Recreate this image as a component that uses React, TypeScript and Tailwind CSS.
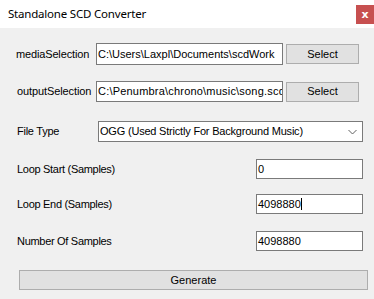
import React from "react";

const font = { fontFamily: '"Liberation Sans", Arial, sans-serif' };

function Field({ value, w, h, caret, track }: { value: string; w: string; h: string; caret?: boolean; track?: string }) {
  return (
    <div
      className={`${w} ${h} bg-white border border-[#7a7a7a] overflow-hidden whitespace-nowrap flex items-center pl-[1px] text-[11px] text-black leading-none ${track ?? ""}`}
    >
      <span>{value}</span>
      {caret && <span className="inline-block w-[1px] h-[12px] bg-black" />}
    </div>
  );
}

function Btn({ label, w, h }: { label: string; w: string; h: string }) {
  return (
    <div
      className={`${w} ${h} bg-[#e1e1e1] border border-[#adadad] flex items-center justify-center text-[11px] text-black leading-none`}
    >
      {label}
    </div>
  );
}

export default function App() {
  return (
    <div className="w-[374px] h-[299px] bg-[#f0f0f0] flex flex-col overflow-hidden" style={font}>
      <div className="h-[28px] bg-white flex items-start justify-between">
        <div
          className="pl-[8px] pt-[5px] text-[11.5px] tracking-[-0.2px] text-black leading-[18px]"
          style={{ fontFamily: '"Noto Sans", "Open Sans", sans-serif' }}
        >
          Standalone SCD Converter
        </div>
        <div
          className="mt-[5px] w-[18px] h-[19px] bg-[#c75050] flex items-center justify-center text-white text-[11px] font-bold leading-none"
          style={{ fontFamily: '"DejaVu Sans", sans-serif' }}
        >
          x
        </div>
      </div>
      <div className="flex flex-col">
        <div className="mt-[15px] h-[22px] flex items-center">
          <div className="w-[96px] pl-[16px] text-[11px] tracking-[-0.15px] text-black">mediaSelection</div>
          <Field value={"C:\\Users\\Laxpl\\Documents\\scdWork"} w="w-[187px]" h="h-[22px]" />
          <div className="ml-[3px]">
            <Btn label="Select" w="w-[73px]" h="h-[20px]" />
          </div>
        </div>
        <div className="mt-[16px] h-[21px] flex items-center">
          <div className="w-[96px] pl-[17px] text-[11px] tracking-[-0.1px] text-black">outputSelection</div>
          <Field
            value={"C:\\Penumbra\\chrono\\music\\song.scd"}
            w="w-[187px]"
            h="h-[21px]"
            track="tracking-[0.2px]"
          />
          <div className="ml-[3px]">
            <Btn label="Select" w="w-[73px]" h="h-[20px]" />
          </div>
        </div>
        <div className="mt-[19px] h-[21px] flex items-center">
          <div className="w-[98px] pl-[17px] text-[11px] tracking-[-0.25px] text-black">File Type</div>
          <div className="w-[265px] h-[21px] bg-white border border-[#7a7a7a] flex items-center justify-between pl-[1px] pr-[5px] text-[11px] tracking-[-0.2px] text-black leading-none">
            <span>OGG (Used Strictly For Background Music)</span>
            <svg width="9" height="6" viewBox="0 0 9 6">
              <path d="M0.5 1 L4.5 5 L8.5 1" fill="none" stroke="#606060" strokeWidth="1" />
            </svg>
          </div>
        </div>
        <div className="mt-[17px] h-[20px] flex items-center">
          <div className="w-[256px] pl-[17px] text-[11px] tracking-[-0.3px] text-black">Loop Start (Samples)</div>
          <Field value="0" w="w-[107px]" h="h-[20px]" />
        </div>
        <div className="mt-[15px] h-[20px] flex items-center">
          <div className="w-[256px] pl-[17px] text-[11px] tracking-[-0.3px] text-black">Loop End (Samples)</div>
          <Field value="4098880" w="w-[107px]" h="h-[20px]" caret />
        </div>
        <div className="mt-[17px] h-[20px] flex items-center">
          <div className="w-[256px] pl-[17px] text-[11px] tracking-[-0.3px] text-black">Number Of Samples</div>
          <Field value="4098880" w="w-[107px]" h="h-[20px]" />
        </div>
        <div className="mt-[19px] pl-[19px]">
          <Btn label="Generate" w="w-[349px]" h="h-[20px]" />
        </div>
      </div>
    </div>
  );
}
